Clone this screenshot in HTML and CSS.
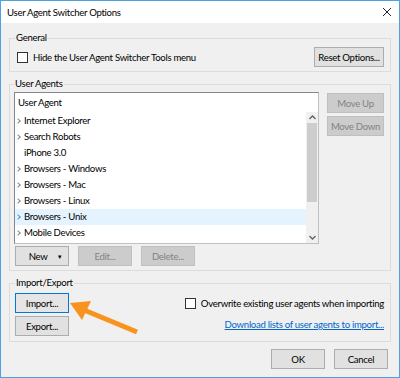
FILE: index.html
```html
<!DOCTYPE html>
<html>
<head>
    <meta charset="utf-8">
    <title>User Agent Switcher Options</title>
    <link rel="stylesheet" href="styles.css">
</head>
<body>
    <div class="window">
        <div class="titlebar">
            <span class="title">User Agent Switcher Options</span>
            <svg class="close" width="10" height="10" viewBox="0 0 10 10"><path d="M1 1L9 9M9 1L1 9" stroke="#222" stroke-width="1"/></svg>
        </div>
        <div class="client">
            <fieldset class="group general">
                <legend>General</legend>
                <div class="row">
                    <label class="check"><span class="box"></span>Hide the User Agent Switcher Tools menu</label>
                    <button class="btn reset">Reset Options...</button>
                </div>
            </fieldset>

            <fieldset class="group agents">
                <legend>User Agents</legend>
                <div class="agents-main">
                    <div class="list">
                        <div class="list-head">User Agent</div>
                        <div class="list-body">
                            <div class="rows">
                                <div class="item"><i class="chev"></i>Internet Explorer</div>
                                <div class="item"><i class="chev"></i>Search Robots</div>
                                <div class="item"><i class="nochev"></i>iPhone 3.0</div>
                                <div class="item"><i class="chev"></i>Browsers - Windows</div>
                                <div class="item"><i class="chev"></i>Browsers - Mac</div>
                                <div class="item"><i class="chev"></i>Browsers - Linux</div>
                                <div class="item selected"><i class="chev"></i>Browsers - Unix</div>
                                <div class="item"><i class="chev"></i>Mobile Devices</div>
                            </div>
                            <div class="scrollbar">
                                <div class="sb-arrow"><svg width="7" height="5" viewBox="0 0 7 5"><path d="M0.5 4L3.5 1L6.5 4" fill="none" stroke="#606060" stroke-width="1.3"/></svg></div>
                                <div class="sb-thumb"></div>
                                <div class="sb-track"></div>
                                <div class="sb-arrow"><svg width="7" height="5" viewBox="0 0 7 5"><path d="M0.5 1L3.5 4L6.5 1" fill="none" stroke="#606060" stroke-width="1.3"/></svg></div>
                            </div>
                        </div>
                    </div>
                    <div class="side">
                        <button class="btn disabled wide">Move Up</button>
                        <button class="btn disabled wide">Move Down</button>
                    </div>
                </div>
                <div class="list-buttons">
                    <button class="btn new">New <span class="drop">&#9662;</span></button>
                    <button class="btn disabled">Edit...</button>
                    <button class="btn disabled">Delete...</button>
                </div>
            </fieldset>

            <fieldset class="group import">
                <legend>Import/Export</legend>
                <div class="import-main">
                    <div class="import-left">
                        <button class="btn default">Import...</button>
                        <button class="btn">Export...</button>
                    </div>
                    <div class="import-right">
                        <label class="check"><span class="box"></span>Overwrite existing user agents when importing</label>
                        <a class="link" href="#">Download lists of user agents to import...</a>
                    </div>
                </div>
            </fieldset>

            <div class="dialog-buttons">
                <button class="btn">OK</button>
                <button class="btn">Cancel</button>
            </div>
        </div>

        <svg class="pointer" width="400" height="378" viewBox="0 0 400 378">
            <line x1="137" y1="332" x2="84" y2="310" stroke="#f7931e" stroke-width="5"/>
            <polygon points="70,303 91,301 82,320" fill="#f7931e"/>
        </svg>
    </div>
</body>
</html>
```

FILE: styles.css
```css
html,
body {
    margin: 0;
    padding: 0;
    background: #fff;
}

body {
    font-family: Lato, Roboto, "Liberation Sans", sans-serif;
    font-size: 9.6px;
    letter-spacing: -0.3px;
    color: #000;
}

.window {
    position: relative;
    width: 400px;
    height: 378px;
    box-sizing: border-box;
    border: 1px solid #4ea2e2;
    background: #f0f0f0;
    display: flex;
    flex-direction: column;
}

.titlebar {
    height: 22px;
    background: #fff;
    display: flex;
    align-items: center;
    justify-content: space-between;
    padding: 0 7px 0 6px;
    flex-shrink: 0;
}

.client {
    padding: 8px 8px 0 8px;
    display: flex;
    flex-direction: column;
}

.group {
    margin: 0;
    border: 1px solid #dcdcdc;
    padding: 0 6px 0 5px;
    min-width: 0;
}

.group legend {
    padding: 0 1px;
    line-height: 14px;
}

.general {
    padding-top: 2px;
    padding-bottom: 4px;
}

.row {
    display: flex;
    align-items: center;
    justify-content: space-between;
}

.check {
    display: flex;
    align-items: center;
    gap: 5px;
    white-space: nowrap;
}

.general .check {
    padding-left: 2px;
}

.box {
    width: 9px;
    height: 9px;
    border: 1px solid #333;
    background: #fff;
}

.btn {
    font: inherit;
    letter-spacing: inherit;
    color: #000;
    height: 20px;
    width: 54px;
    padding: 0;
    white-space: nowrap;
    background: #e1e1e1;
    border: 1px solid #adadad;
    box-sizing: border-box;
}

.btn.reset {
    width: 70px;
}

.btn.disabled {
    background: #cccccc;
    border-color: #bfbfbf;
    color: #838383;
}

.btn.default {
    border-color: #0078d7;
    background: #e5e5e5;
}

.agents {
    margin-top: 5px;
    padding-top: 1px;
    padding-bottom: 4px;
    padding-left: 4px;
}

.agents-main {
    display: flex;
    gap: 8px;
}

.list {
    width: 305px;
    height: 152px;
    box-sizing: border-box;
    border: 1px solid #828790;
    border-right-color: #c0c0c0;
    border-bottom-color: #c0c0c0;
    background: #fff;
    display: flex;
    flex-direction: column;
}

.list-head {
    height: 19px;
    line-height: 19px;
    padding-left: 3px;
    flex-shrink: 0;
}

.list-body {
    flex: 1;
    display: flex;
}

.rows {
    flex: 1;
    padding-top: 1px;
}

.item {
    height: 16px;
    line-height: 16px;
    display: flex;
    align-items: center;
}

.item.selected {
    background: #e5f3ff;
}

.chev,
.nochev {
    width: 9px;
    height: 16px;
    flex-shrink: 0;
    position: relative;
}

.chev::before {
    content: "";
    position: absolute;
    left: 1px;
    top: 6px;
    width: 3px;
    height: 3px;
    border-top: 1px solid #8a8a8a;
    border-right: 1px solid #8a8a8a;
    transform: rotate(45deg);
}

.selected .chev::before {
    border-color: #3aa0e8;
}

.scrollbar {
    width: 12px;
    background: #f0f0f0;
    display: flex;
    flex-direction: column;
}

.sb-arrow {
    height: 11px;
    display: flex;
    align-items: center;
    justify-content: center;
}

.sb-thumb {
    height: 79px;
    margin: 0 1px;
    background: #cdcdcd;
}

.sb-track {
    flex: 1;
}

.side {
    display: flex;
    flex-direction: column;
    gap: 3px;
    padding-top: 1px;
}

.btn.wide {
    width: 57px;
}

.list-buttons {
    display: flex;
    gap: 9px;
    margin-top: 2px;
    padding-left: 1px;
}

.btn.new {
    display: flex;
    align-items: center;
    justify-content: center;
    gap: 10px;
    padding-left: 6px;
}

.drop {
    font-size: 7px;
}

.import {
    margin-top: 5px;
    padding-top: 3px;
    padding-bottom: 5px;
}

.import-main {
    display: flex;
    justify-content: space-between;
}

.import-left {
    display: flex;
    flex-direction: column;
    gap: 3px;
}

.import-right {
    display: flex;
    flex-direction: column;
    align-items: flex-end;
    gap: 10px;
    padding-top: 5px;
}

.link {
    color: #0066cc;
    text-decoration: underline;
}

.dialog-buttons {
    display: flex;
    justify-content: flex-end;
    gap: 9px;
    margin-top: 7px;
    padding-right: 3px;
}

.pointer {
    position: absolute;
    left: -1px;
    top: -1px;
    pointer-events: none;
}
```
